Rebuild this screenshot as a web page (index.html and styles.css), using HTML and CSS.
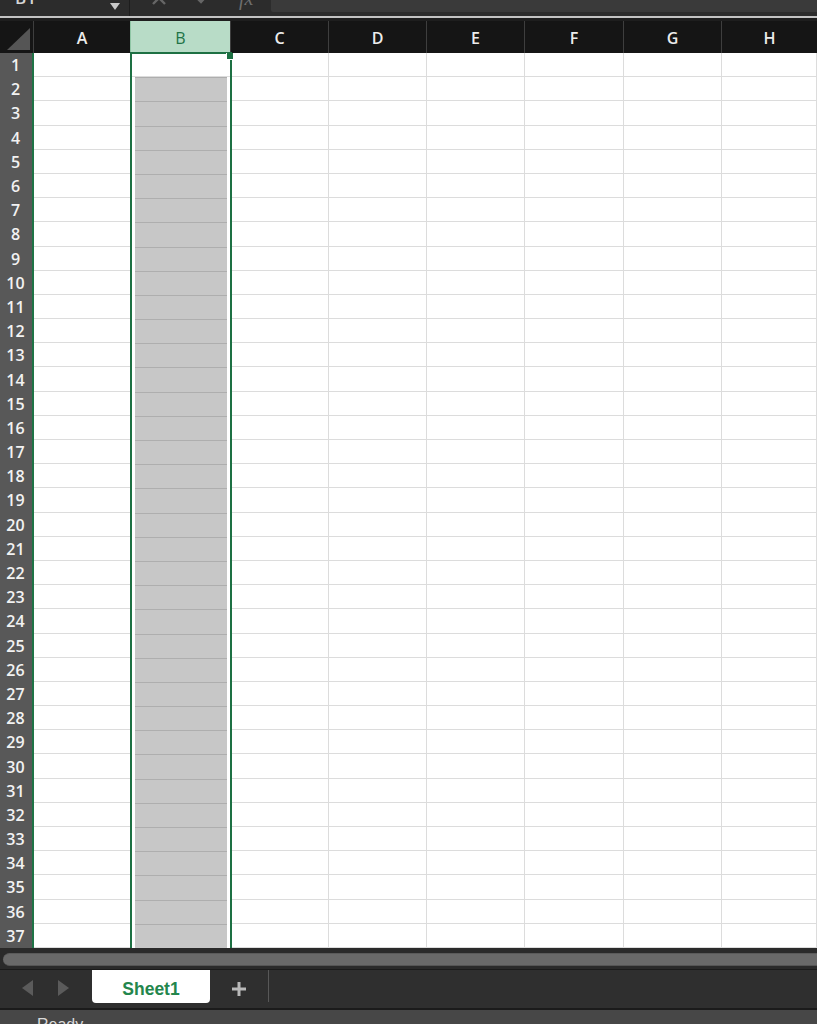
FILE: index.html
```html
<!DOCTYPE html>
<html lang="en">
<head>
<meta charset="utf-8">
<title>Sheet1</title>
<link rel="stylesheet" href="styles.css">
</head>
<body>
<div class="app">
  <div class="topbar">
    <div class="namebox"><span class="nb-text">B1</span>
      <svg class="nb-arrow" width="10" height="8" viewBox="0 0 10 8"><polygon points="0,0 10,0 5,7" fill="#c9c9c9"/></svg>
    </div>
    <div class="fx-tools">
      <svg class="ico ico-x" width="14" height="14" viewBox="0 0 14 14"><path d="M1 1 L13 13 M13 1 L1 13" stroke="#666" stroke-width="2.4" fill="none"/></svg>
      <svg class="ico ico-check" width="16" height="14" viewBox="0 0 16 14"><path d="M1 6 L6 11 L15 1" stroke="#666" stroke-width="2.4" fill="none"/></svg>
      <span class="fx">fx</span>
    </div>
    <div class="formula"></div>
  </div>
  <div class="topline"></div>

  <div class="sheet">
    <div class="hdr">
      <div class="corner"><svg width="25" height="24" viewBox="0 0 25 24"><polygon points="24,1 24,23 1,23" fill="#555"/></svg></div>
      <div class="ch">A</div>
      <div class="ch ch-sel">B</div>
      <div class="ch">C</div>
      <div class="ch">D</div>
      <div class="ch">E</div>
      <div class="ch">F</div>
      <div class="ch">G</div>
      <div class="ch ch-last">H</div>
    </div>
    <div class="rows">
      <div class="row"><div class="rh">1</div><div class="c"></div><div class="c cb active"></div><div class="c"></div><div class="c"></div><div class="c"></div><div class="c"></div><div class="c"></div><div class="c"></div></div>
      <div class="row"><div class="rh">2</div><div class="c"></div><div class="c cb"><i class="g"></i></div><div class="c"></div><div class="c"></div><div class="c"></div><div class="c"></div><div class="c"></div><div class="c"></div></div>
      <div class="row"><div class="rh">3</div><div class="c"></div><div class="c cb"><i class="g"></i></div><div class="c"></div><div class="c"></div><div class="c"></div><div class="c"></div><div class="c"></div><div class="c"></div></div>
      <div class="row"><div class="rh">4</div><div class="c"></div><div class="c cb"><i class="g"></i></div><div class="c"></div><div class="c"></div><div class="c"></div><div class="c"></div><div class="c"></div><div class="c"></div></div>
      <div class="row"><div class="rh">5</div><div class="c"></div><div class="c cb"><i class="g"></i></div><div class="c"></div><div class="c"></div><div class="c"></div><div class="c"></div><div class="c"></div><div class="c"></div></div>
      <div class="row"><div class="rh">6</div><div class="c"></div><div class="c cb"><i class="g"></i></div><div class="c"></div><div class="c"></div><div class="c"></div><div class="c"></div><div class="c"></div><div class="c"></div></div>
      <div class="row"><div class="rh">7</div><div class="c"></div><div class="c cb"><i class="g"></i></div><div class="c"></div><div class="c"></div><div class="c"></div><div class="c"></div><div class="c"></div><div class="c"></div></div>
      <div class="row"><div class="rh">8</div><div class="c"></div><div class="c cb"><i class="g"></i></div><div class="c"></div><div class="c"></div><div class="c"></div><div class="c"></div><div class="c"></div><div class="c"></div></div>
      <div class="row"><div class="rh">9</div><div class="c"></div><div class="c cb"><i class="g"></i></div><div class="c"></div><div class="c"></div><div class="c"></div><div class="c"></div><div class="c"></div><div class="c"></div></div>
      <div class="row"><div class="rh">10</div><div class="c"></div><div class="c cb"><i class="g"></i></div><div class="c"></div><div class="c"></div><div class="c"></div><div class="c"></div><div class="c"></div><div class="c"></div></div>
      <div class="row"><div class="rh">11</div><div class="c"></div><div class="c cb"><i class="g"></i></div><div class="c"></div><div class="c"></div><div class="c"></div><div class="c"></div><div class="c"></div><div class="c"></div></div>
      <div class="row"><div class="rh">12</div><div class="c"></div><div class="c cb"><i class="g"></i></div><div class="c"></div><div class="c"></div><div class="c"></div><div class="c"></div><div class="c"></div><div class="c"></div></div>
      <div class="row"><div class="rh">13</div><div class="c"></div><div class="c cb"><i class="g"></i></div><div class="c"></div><div class="c"></div><div class="c"></div><div class="c"></div><div class="c"></div><div class="c"></div></div>
      <div class="row"><div class="rh">14</div><div class="c"></div><div class="c cb"><i class="g"></i></div><div class="c"></div><div class="c"></div><div class="c"></div><div class="c"></div><div class="c"></div><div class="c"></div></div>
      <div class="row"><div class="rh">15</div><div class="c"></div><div class="c cb"><i class="g"></i></div><div class="c"></div><div class="c"></div><div class="c"></div><div class="c"></div><div class="c"></div><div class="c"></div></div>
      <div class="row"><div class="rh">16</div><div class="c"></div><div class="c cb"><i class="g"></i></div><div class="c"></div><div class="c"></div><div class="c"></div><div class="c"></div><div class="c"></div><div class="c"></div></div>
      <div class="row"><div class="rh">17</div><div class="c"></div><div class="c cb"><i class="g"></i></div><div class="c"></div><div class="c"></div><div class="c"></div><div class="c"></div><div class="c"></div><div class="c"></div></div>
      <div class="row"><div class="rh">18</div><div class="c"></div><div class="c cb"><i class="g"></i></div><div class="c"></div><div class="c"></div><div class="c"></div><div class="c"></div><div class="c"></div><div class="c"></div></div>
      <div class="row"><div class="rh">19</div><div class="c"></div><div class="c cb"><i class="g"></i></div><div class="c"></div><div class="c"></div><div class="c"></div><div class="c"></div><div class="c"></div><div class="c"></div></div>
      <div class="row"><div class="rh">20</div><div class="c"></div><div class="c cb"><i class="g"></i></div><div class="c"></div><div class="c"></div><div class="c"></div><div class="c"></div><div class="c"></div><div class="c"></div></div>
      <div class="row"><div class="rh">21</div><div class="c"></div><div class="c cb"><i class="g"></i></div><div class="c"></div><div class="c"></div><div class="c"></div><div class="c"></div><div class="c"></div><div class="c"></div></div>
      <div class="row"><div class="rh">22</div><div class="c"></div><div class="c cb"><i class="g"></i></div><div class="c"></div><div class="c"></div><div class="c"></div><div class="c"></div><div class="c"></div><div class="c"></div></div>
      <div class="row"><div class="rh">23</div><div class="c"></div><div class="c cb"><i class="g"></i></div><div class="c"></div><div class="c"></div><div class="c"></div><div class="c"></div><div class="c"></div><div class="c"></div></div>
      <div class="row"><div class="rh">24</div><div class="c"></div><div class="c cb"><i class="g"></i></div><div class="c"></div><div class="c"></div><div class="c"></div><div class="c"></div><div class="c"></div><div class="c"></div></div>
      <div class="row"><div class="rh">25</div><div class="c"></div><div class="c cb"><i class="g"></i></div><div class="c"></div><div class="c"></div><div class="c"></div><div class="c"></div><div class="c"></div><div class="c"></div></div>
      <div class="row"><div class="rh">26</div><div class="c"></div><div class="c cb"><i class="g"></i></div><div class="c"></div><div class="c"></div><div class="c"></div><div class="c"></div><div class="c"></div><div class="c"></div></div>
      <div class="row"><div class="rh">27</div><div class="c"></div><div class="c cb"><i class="g"></i></div><div class="c"></div><div class="c"></div><div class="c"></div><div class="c"></div><div class="c"></div><div class="c"></div></div>
      <div class="row"><div class="rh">28</div><div class="c"></div><div class="c cb"><i class="g"></i></div><div class="c"></div><div class="c"></div><div class="c"></div><div class="c"></div><div class="c"></div><div class="c"></div></div>
      <div class="row"><div class="rh">29</div><div class="c"></div><div class="c cb"><i class="g"></i></div><div class="c"></div><div class="c"></div><div class="c"></div><div class="c"></div><div class="c"></div><div class="c"></div></div>
      <div class="row"><div class="rh">30</div><div class="c"></div><div class="c cb"><i class="g"></i></div><div class="c"></div><div class="c"></div><div class="c"></div><div class="c"></div><div class="c"></div><div class="c"></div></div>
      <div class="row"><div class="rh">31</div><div class="c"></div><div class="c cb"><i class="g"></i></div><div class="c"></div><div class="c"></div><div class="c"></div><div class="c"></div><div class="c"></div><div class="c"></div></div>
      <div class="row"><div class="rh">32</div><div class="c"></div><div class="c cb"><i class="g"></i></div><div class="c"></div><div class="c"></div><div class="c"></div><div class="c"></div><div class="c"></div><div class="c"></div></div>
      <div class="row"><div class="rh">33</div><div class="c"></div><div class="c cb"><i class="g"></i></div><div class="c"></div><div class="c"></div><div class="c"></div><div class="c"></div><div class="c"></div><div class="c"></div></div>
      <div class="row"><div class="rh">34</div><div class="c"></div><div class="c cb"><i class="g"></i></div><div class="c"></div><div class="c"></div><div class="c"></div><div class="c"></div><div class="c"></div><div class="c"></div></div>
      <div class="row"><div class="rh">35</div><div class="c"></div><div class="c cb"><i class="g"></i></div><div class="c"></div><div class="c"></div><div class="c"></div><div class="c"></div><div class="c"></div><div class="c"></div></div>
      <div class="row"><div class="rh">36</div><div class="c"></div><div class="c cb"><i class="g"></i></div><div class="c"></div><div class="c"></div><div class="c"></div><div class="c"></div><div class="c"></div><div class="c"></div></div>
      <div class="row"><div class="rh">37</div><div class="c"></div><div class="c cb"><i class="g"></i></div><div class="c"></div><div class="c"></div><div class="c"></div><div class="c"></div><div class="c"></div><div class="c"></div></div>
    </div>
    <div class="selection"><span class="handle"></span></div>
  </div>

  <div class="hscroll"><div class="thumb"></div></div>

  <div class="tabbar">
    <div class="nav">
      <svg width="12" height="16" viewBox="0 0 12 16"><polygon points="11,0 11,16 0,8" fill="#5b5b5b"/></svg>
      <svg width="12" height="16" viewBox="0 0 12 16"><polygon points="1,0 1,16 12,8" fill="#5b5b5b"/></svg>
    </div>
    <div class="tab">Sheet1</div>
    <div class="add"><svg width="16" height="16" viewBox="0 0 16 16"><path d="M8 1 V15 M1 8 H15" stroke="#b9b9b9" stroke-width="3" fill="none"/></svg></div>
    <div class="tab-divider"></div>
  </div>
  <div class="statusline"></div>
  <div class="status"><span class="status-text">Ready</span></div>
</div>
</body>
</html>
```
FILE: styles.css
```css
html, body {
  margin: 0;
  padding: 0;
  background: #2b2b2b;
}
body {
  width: 817px;
  height: 1024px;
  overflow: hidden;
  font-family: "Open Sans", "Liberation Sans", sans-serif;
}
.app {
  width: 817px;
  height: 1024px;
  display: flex;
  flex-direction: column;
  overflow: hidden;
}

/* top formula bar (cut off) */
.topbar {
  height: 16px;
  display: flex;
  background: #2c2c2c;
  overflow: hidden;
  flex: none;
}
.namebox {
  width: 130px;
  display: flex;
  align-items: flex-start;
  justify-content: space-between;
  padding: 0 9px 0 15px;
  box-sizing: border-box;
  border-right: 1px solid #1d1d1d;
}
.nb-text {
  color: #d6d6d6;
  font-size: 17px;
  line-height: 17px;
  margin-top: -11px;
  font-weight: 600;
}
.nb-arrow {
  margin-top: 3px;
}
.fx-tools {
  width: 141px;
  display: flex;
  align-items: flex-start;
  padding-left: 22px;
  box-sizing: border-box;
}
.ico-x {
  margin-top: -9px;
}
.ico-check {
  margin-top: -9px;
  margin-left: 29px;
}
.fx {
  margin-top: -12px;
  margin-left: 28px;
  color: #6e6e6e;
  font-family: "Liberation Serif", serif;
  font-style: italic;
  font-size: 20px;
  line-height: 20px;
}
.formula {
  flex: 1;
  height: 12px;
  background: #3a3a3a;
  border-radius: 0 0 0 2px;
}
.topline {
  flex: none;
  height: 2px;
  background: #c3c3c3;
  border-bottom: 3px solid #1e1e1e;
}

/* sheet grid */
.sheet {
  position: relative;
  flex: none;
  height: 927px;
  overflow: hidden;
  background: #fff;
}
.hdr, .row {
  display: grid;
  grid-template-columns: 34px 97px 100px 98px 98px 98px 99px 98px 95px;
}
.hdr {
  height: 32px;
  background: #151515;
}
.corner {
  border-right: 1px solid #3e3e3e;
  display: flex;
  align-items: flex-end;
  justify-content: flex-end;
  padding: 0 2px 2px 0;
}
.ch {
  color: #ececec;
  font-size: 16px;
  font-weight: 600;
  display: flex;
  align-items: center;
  justify-content: center;
  border-right: 1px solid #3e3e3e;
  padding-top: 1px;
}
.ch-last {
  border-right: none;
}
.ch-sel {
  background: #b8dcc7;
  color: #217346;
  font-weight: 500;
  border-left: 1px solid #8fc6a5;
  margin-left: -1px;
}
.row {
  height: 24.19px;
}
.rh {
  background: #585858;
  color: #f2f2f2;
  font-size: 16px;
  font-weight: 600;
  display: flex;
  align-items: center;
  justify-content: center;
  border-right: 2px solid #1f7346;
  padding-right: 1px;
}
.c {
  box-sizing: border-box;
  border-right: 1px solid #dcdcdc;
  border-bottom: 1px solid #dcdcdc;
}
.cb {
  border-bottom: none;
  padding: 0 3px 0 4px;
}
.cb.active {
  border-bottom: 1px solid #dcdcdc;
}
.g {
  display: block;
  height: 100%;
  box-sizing: border-box;
  background: #c7c7c7;
  border-top: 1px solid #aeaeae;
}

/* selection outline over column B */
.selection {
  position: absolute;
  left: 130px;
  top: 31px;
  width: 102px;
  bottom: 0;
  box-sizing: border-box;
  border: 2px solid #1d7043;
  border-bottom: none;
  pointer-events: none;
}
.handle {
  position: absolute;
  right: -4px;
  top: -1px;
  width: 6px;
  height: 6px;
  background: #1d7043;
  border: 1px solid #fff;
  border-top: none;
}

/* horizontal scrollbar */
.hscroll {
  flex: none;
  height: 22px;
  box-sizing: border-box;
  background: #2a2a2a;
  padding: 5px 0 3px 3px;
  border-bottom: 1px solid #1b1b1b;
}
.thumb {
  height: 13px;
  background: #696969;
  border-radius: 7px 0 0 7px;
  border-top: 1px solid #5a5a5a;
  border-bottom: 1px solid #555;
  box-sizing: border-box;
}

/* sheet tabs */
.tabbar {
  flex: none;
  height: 38px;
  background: #2f2f2f;
  display: flex;
  align-items: flex-start;
}
.nav {
  width: 92px;
  height: 33px;
  display: flex;
  align-items: center;
  padding-left: 22px;
  box-sizing: border-box;
  gap: 23px;
  padding-top: 3px;
}
.tab {
  width: 118px;
  height: 33px;
  background: #fff;
  border-radius: 0 0 4px 4px;
  color: #23864d;
  font-family: "Liberation Sans", Arial, sans-serif;
  font-weight: 700;
  font-size: 17.5px;
  display: flex;
  align-items: center;
  justify-content: center;
  padding-top: 5px;
  box-sizing: border-box;
}
.add {
  width: 58px;
  height: 33px;
  display: flex;
  align-items: center;
  justify-content: center;
  padding-top: 5px;
  box-sizing: border-box;
}
.tab-divider {
  width: 1px;
  height: 32px;
  background: #585858;
}
.statusline {
  flex: none;
  height: 2px;
  background: #1b1b1b;
}
.status {
  flex: 1;
  background: #474747;
  overflow: hidden;
  padding-left: 37px;
}
.status-text {
  display: block;
  color: #d9d9d9;
  font-family: "Liberation Sans", Arial, sans-serif;
  font-size: 16px;
  line-height: 16px;
  margin-top: 7px;
}
```
